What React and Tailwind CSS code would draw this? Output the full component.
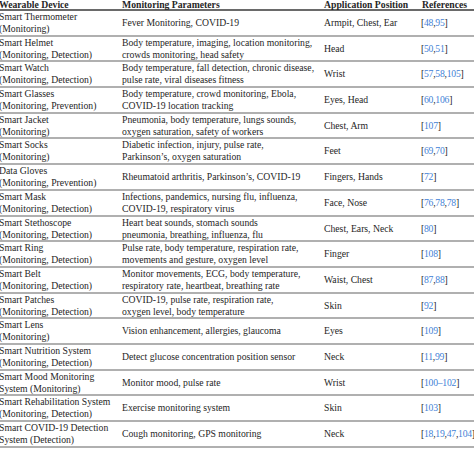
const rows = [
  { d: ["Smart Thermometer", "(Monitoring)"], p: ["Fever Monitoring, COVID-19"], a: "Armpit, Chest, Ear", r: ["48", "95"] },
  { d: ["Smart Helmet", "(Monitoring, Detection)"], p: ["Body temperature, imaging, location monitoring,", "crowds monitoring, head safety"], a: "Head", r: ["50", "51"] },
  { d: ["Smart Watch", "(Monitoring, Detection)"], p: ["Body temperature, fall detection, chronic disease,", "pulse rate, viral diseases fitness"], a: "Wrist", r: ["57", "58", "105"] },
  { d: ["Smart Glasses", "(Monitoring, Prevention)"], p: ["Body temperature, crowd monitoring, Ebola,", "COVID-19 location tracking"], a: "Eyes, Head", r: ["60", "106"] },
  { d: ["Smart Jacket", "(Monitoring)"], p: ["Pneumonia, body temperature, lungs sounds,", "oxygen saturation, safety of workers"], a: "Chest, Arm", r: ["107"] },
  { d: ["Smart Socks", "(Monitoring)"], p: ["Diabetic infection, injury, pulse rate,", "Parkinson\u2019s, oxygen saturation"], a: "Feet", r: ["69", "70"] },
  { d: ["Data Gloves", "(Monitoring, Prevention)"], p: ["Rheumatoid arthritis, Parkinson\u2019s, COVID-19"], a: "Fingers, Hands", r: ["72"] },
  { d: ["Smart Mask", "(Monitoring, Detection)"], p: ["Infections, pandemics, nursing flu, influenza,", "COVID-19, respiratory virus"], a: "Face, Nose", r: ["76", "78", "78"] },
  { d: ["Smart Stethoscope", "(Monitoring, Detection)"], p: ["Heart beat sounds, stomach sounds", "pneumonia, breathing, influenza, flu"], a: "Chest, Ears, Neck", r: ["80"] },
  { d: ["Smart Ring", "(Monitoring, Detection)"], p: ["Pulse rate, body temperature, respiration rate,", "movements and gesture, oxygen level"], a: "Finger", r: ["108"] },
  { d: ["Smart Belt", "(Monitoring, Detection)"], p: ["Monitor movements, ECG, body temperature,", "respiratory rate, heartbeat, breathing rate"], a: "Waist, Chest", r: ["87", "88"] },
  { d: ["Smart Patches", "(Monitoring, Detection)"], p: ["COVID-19, pulse rate, respiration rate,", "oxygen level, body temperature"], a: "Skin", r: ["92"] },
  { d: ["Smart Lens", "(Monitoring)"], p: ["Vision enhancement, allergies, glaucoma"], a: "Eyes", r: ["109"] },
  { d: ["Smart Nutrition System", "(Monitoring, Detection)"], p: ["Detect glucose concentration position sensor"], a: "Neck", r: ["11", "99"] },
  { d: ["Smart Mood Monitoring", "System (Monitoring)"], p: ["Monitor mood, pulse rate"], a: "Wrist", r: ["100\u2013102"] },
  { d: ["Smart Rehabilitation System", "(Monitoring, Detection)"], p: ["Exercise monitoring system"], a: "Skin", r: ["103"] },
  { d: ["Smart COVID-19 Detection", "System (Detection)"], p: ["Cough monitoring, GPS monitoring"], a: "Neck", r: ["18", "19", "47", "104"] },
];

const Refs = ({ list }) => (
  <span>
    [
    {list.map((n, i) => (
      <span key={i}>
        {i > 0 && ","}
        <span className="text-[#3f7fd6]">{n}</span>
      </span>
    ))}
    ]
  </span>
);

const App = () => {
  return (
    <div
      className="w-[474px] h-[453px] overflow-hidden bg-white text-[#262626] text-[9.7px] leading-[12px]"
      style={{ fontFamily: '"Liberation Serif", "Times New Roman", serif' }}
    >
      <div className="grid grid-cols-[122px_202px_98px_1fr] h-[12px] border-b-2 border-[#6a6a6a] font-bold items-end -mt-[1px] pb-[1px]">
        <div className="-ml-[1px] whitespace-nowrap">Wearable Device</div>
        <div className="whitespace-nowrap">Monitoring Parameters</div>
        <div className="whitespace-nowrap">Application Position</div>
        <div className="whitespace-nowrap">References</div>
      </div>
      {rows.map((row, i) => (
        <div
          key={i}
          className="grid grid-cols-[122px_202px_98px_1fr] h-[25.7px] border-b-2 border-[#b0b0b0] items-center"
        >
          <div className="-ml-[1px] whitespace-nowrap">
            {row.d.map((l, j) => (
              <div key={j}>{l}</div>
            ))}
          </div>
          <div className="whitespace-nowrap">
            {row.p.map((l, j) => (
              <div key={j}>{l}</div>
            ))}
          </div>
          <div className="whitespace-nowrap">{row.a}</div>
          <div className="whitespace-nowrap -ml-[1px] tracking-[-0.25px]">
            <Refs list={row.r} />
          </div>
        </div>
      ))}
    </div>
  );
};

export default App;
